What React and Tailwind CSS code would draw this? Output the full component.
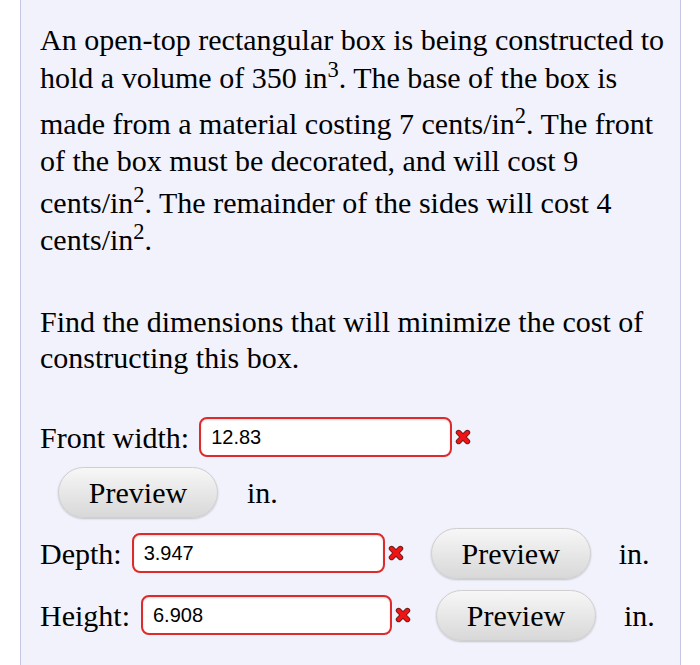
import React from "react";

const serif = { fontFamily: '"Liberation Serif", "Times New Roman", serif' };

const Cross = () => (
  <svg width="16" height="16" viewBox="0 0 20 20" className="shrink-0">
    <path d="M4.5 4.5 L15.5 15.5 M15.5 4.5 L4.5 15.5" stroke="#6e1c1c" strokeWidth="7" strokeLinecap="round" />
    <path d="M4.5 4.5 L15.5 15.5 M15.5 4.5 L4.5 15.5" stroke="#f01414" strokeWidth="4.6" strokeLinecap="round" />
  </svg>
);

const Field = ({ value, width }) => (
  <div
    className={`h-[40px] ${width} flex items-center bg-white border-2 border-[#dd2a2a] rounded-[8px] pl-[10px] text-[20px] text-black shadow-[inset_0_1px_2px_rgba(0,0,0,0.15)]`}
    style={{ fontFamily: '"Liberation Sans", Arial, sans-serif' }}
  >
    {value}
  </div>
);

const PreviewBtn = () => (
  <button
    className="h-[51px] w-[160px] rounded-full border border-[#cfcfcf] bg-gradient-to-b from-[#f7f7f7] to-[#d8d8d8] text-[30px] text-black shadow-[0_1px_2px_rgba(0,0,0,0.2)]"
    style={serif}
  >
    Preview
  </button>
);

export default function App() {
  return (
    <div className="bg-white w-[700px] h-[665px] overflow-hidden">
      <div
        className="ml-[20px] w-[661px] h-[665px] bg-[#f2f2fd] border-x border-[#c6c6e2] pl-[19px] pt-[21px] text-[30px] text-black"
        style={serif}
      >
        <div className="whitespace-nowrap leading-[38px]">
          <div>An open-top rectangular box is being constructed to</div>
          <div>
            hold a volume of 350 in<sup>3</sup>. The base of the box is
          </div>
          <div className="mt-[8px]">
            made from a material costing 7 cents/in<sup>2</sup>. The front
          </div>
          <div className="-mt-[1px]">of the box must be decorated, and will cost 9</div>
          <div className="mt-[4px]">
            cents/in<sup>2</sup>. The remainder of the sides will cost 4
          </div>
          <div className="-mt-[1px]">
            cents/in<sup>2</sup>.
          </div>
          <div className="mt-[44px]">Find the dimensions that will minimize the cost of</div>
          <div className="-mt-[2px]">constructing this box.</div>
        </div>

        <div className="mt-[40px] flex items-center h-[40px]">
          <span className="mr-[10px]">Front width:</span>
          <Field value="12.83" width="w-[253px]" />
          <span className="ml-[3px]">
            <Cross />
          </span>
        </div>
        <div className="mt-[10px] flex items-center pl-[18px]">
          <PreviewBtn />
          <span className="ml-[29px]">in.</span>
        </div>

        <div className="mt-[8px] flex items-center h-[54px]">
          <span className="mr-[10px]">Depth:</span>
          <Field value="3.947" width="w-[253px]" />
          <span className="ml-[3px]">
            <Cross />
          </span>
          <span className="ml-[27px]">
            <PreviewBtn />
          </span>
          <span className="ml-[28px]">in.</span>
        </div>

        <div className="mt-[8px] flex items-center h-[54px]">
          <span className="mr-[11px]">Height:</span>
          <Field value="6.908" width="w-[251px]" />
          <span className="ml-[3px]">
            <Cross />
          </span>
          <span className="ml-[25px]">
            <PreviewBtn />
          </span>
          <span className="ml-[28px]">in.</span>
        </div>
      </div>
    </div>
  );
}
